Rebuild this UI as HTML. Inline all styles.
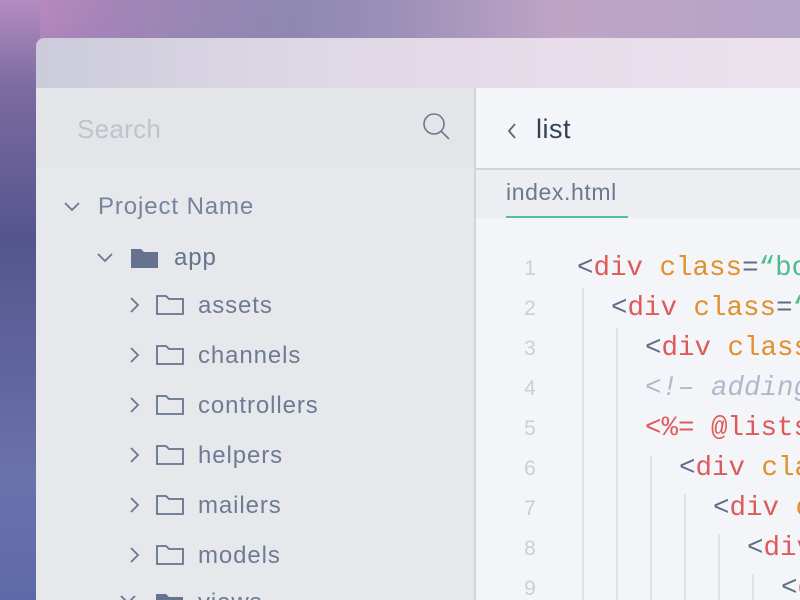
<!DOCTYPE html>
<html><head><meta charset="utf-8"><style>
*{margin:0;padding:0;box-sizing:border-box}
html{width:800px;height:600px;overflow:hidden}
body{width:800px;height:600px;overflow:hidden;position:relative;font-family:"Liberation Sans",sans-serif}
#root{position:absolute;left:0;top:0;width:800px;height:600px;overflow:hidden;
background:radial-gradient(ellipse 300px 200px at 0px 0px,#c48fc4,transparent),linear-gradient(90deg,#5a5a92 0%,#7c7fa8 20%,#9c90b8 50%,#c0a4c6 70%,#b4a4c8 100%);}
.bgl{position:absolute;left:0;top:0;width:40px;height:600px;background:linear-gradient(180deg,#b48cc0 0%,#7a6aa0 15%,#55558e 40%,#6a72ac 80%,#5e6aa8)}
.win{position:absolute;left:36px;top:38px;width:764px;height:562px;border-radius:8px 0 0 0;overflow:hidden;background:linear-gradient(90deg,#cbcbdb,#dcd6e4 30%,#e6dbe8 60%,#ece2ee)}
.side{position:absolute;left:0;top:50px;width:438px;height:512px;background:#e7e8eb;overflow:hidden}
.search{height:79px;background:#e4e5e8;position:relative}
.search span{position:absolute;left:41px;top:26px;font-size:26px;color:#bec3cc;letter-spacing:.3px}
.vb{position:absolute;left:438px;top:50px;width:2px;height:512px;background:#cdd5dd}
.main{position:absolute;left:440px;top:50px;width:324px;height:512px;background:#f4f5f8;overflow:hidden}
.hdr{height:82px;border-bottom:2px solid #cdd5dd;position:relative}
.hdr span{position:absolute;left:60px;top:26px;font-size:27px;color:#34405a;letter-spacing:.5px}
.tab{height:48px;background:#eceef1;position:relative}
.tab span{position:absolute;left:30px;top:9px;font-size:23px;color:#6c7891;letter-spacing:.6px}
.tab i{position:absolute;left:30px;bottom:0;width:122px;height:2px;background:#56bf98}
.t{position:absolute;font-size:24px;color:#6e7b95;white-space:nowrap;letter-spacing:.9px}
.code{position:absolute;font-family:"Liberation Mono",monospace;font-size:27.5px;white-space:nowrap;line-height:40px;overflow:hidden}
.ln{color:#c8cedb;font-family:"Liberation Sans",sans-serif;font-size:21px;position:absolute;left:44px;width:20px;text-align:center}
.r{color:#de5a5a}.o{color:#e0912e}.g{color:#4dbb8e}.p{color:#606d88}.c{color:#b0b9cc;font-style:italic}
.gl{position:absolute;width:2px;background:#e0e3ea}
</style></head><body><div id="root">
<div class="bgl"></div>
<div class="win">
 <div class="side"><div class="search"><span>Search</span>
  <svg style="position:absolute;left:386px;top:24px" width="32" height="32"><circle cx="12" cy="12" r="10" fill="none" stroke="#6c7891" stroke-width="1.6"/><line x1="19" y1="19" x2="27" y2="27" stroke="#6c7891" stroke-width="1.6"/></svg></div>
  <svg style="position:absolute;left:0;top:0" width="438" height="512" viewBox="36 88 438 512">
 <g fill="none" stroke="#6c7891" stroke-width="1.8">
  <path d="M65 203 L72 210 L79 203"/>
  <path d="M98 254 L105 261 L112 254"/>
  <path d="M131 298 L138 305 L131 312"/><path d="M131 348 L138 355 L131 362"/><path d="M131 398 L138 405 L131 412"/>
  <path d="M131 448 L138 455 L131 462"/><path d="M131 498 L138 505 L131 512"/><path d="M131 548 L138 555 L131 562"/>
  <path d="M121 596 L128 603 L135 596"/>
 </g>
 <path d="M131 249 h10 l3 3 h14 v16 h-27z" fill="#66738e"/>
 <path d="M156 594 h10 l3 3 h14 v10 h-27z" fill="#66738e"/>
 <g fill="none" stroke="#66738e" stroke-width="1.8">
  <path d="M157 296 h9 l3 3 h14 v15 h-26z"/>
  <path d="M157 346 h9 l3 3 h14 v15 h-26z"/>
  <path d="M157 396 h9 l3 3 h14 v15 h-26z"/>
  <path d="M157 446 h9 l3 3 h14 v15 h-26z"/>
  <path d="M157 496 h9 l3 3 h14 v15 h-26z"/>
  <path d="M157 546 h9 l3 3 h14 v15 h-26z"/>
 </g>
  </svg>
  <div class="t" style="left:62px;top:105px;color:#7783a0">Project Name</div>
  <div class="t" style="left:138px;top:156px;color:#66738e">app</div>
  <div class="t" style="left:162px;top:204px">assets</div>
  <div class="t" style="left:162px;top:254px">channels</div>
  <div class="t" style="left:162px;top:304px">controllers</div>
  <div class="t" style="left:162px;top:354px">helpers</div>
  <div class="t" style="left:162px;top:404px">mailers</div>
  <div class="t" style="left:162px;top:454px">models</div>
  <div class="t" style="left:162px;top:501px;height:11px;overflow:hidden">views</div>
 </div>
 <div class="vb"></div>
 <div class="main"><div class="hdr"><svg style="position:absolute;left:30px;top:34px" width="12" height="20"><path d="M9 2 L3 9 L9 16" fill="none" stroke="#5a6680" stroke-width="1.8"/></svg><span>list</span></div>
 <div class="tab"><span>index.html</span><i></i></div>
 <div class="gl" style="left:106px;top:200px;height:312px"></div>
 <div class="gl" style="left:140px;top:240px;height:272px"></div>
 <div class="gl" style="left:174px;top:368px;height:144px"></div>
 <div class="gl" style="left:208px;top:406px;height:106px"></div>
 <div class="gl" style="left:242px;top:446px;height:66px"></div>
 <div class="gl" style="left:276px;top:486px;height:26px"></div>
 <div class="ln" style="top:169px">1</div><div class="ln" style="top:209px">2</div><div class="ln" style="top:249px">3</div>
 <div class="ln" style="top:289px">4</div><div class="ln" style="top:329px">5</div><div class="ln" style="top:369px">6</div>
 <div class="ln" style="top:409px">7</div><div class="ln" style="top:449px">8</div><div class="ln" style="top:489px;height:23px;overflow:hidden">9</div>
 <div class="code" style="left:101px;top:161px;width:223px"><span class="p">&lt;</span><span class="r">div</span> <span class="o">class</span><span class="p">=</span><span class="g">“box</span></div>
 <div class="code" style="left:135px;top:201px;width:189px"><span class="p">&lt;</span><span class="r">div</span> <span class="o">class</span><span class="p">=</span><span class="g">“</span></div>
 <div class="code" style="left:169px;top:241px;width:155px"><span class="p">&lt;</span><span class="r">div</span> <span class="o">class</span></div>
 <div class="code c" style="left:169px;top:281px;width:155px">&lt;!– adding</div>
 <div class="code r" style="left:169px;top:321px;width:155px">&lt;%= @lists</div>
 <div class="code" style="left:203px;top:361px;width:121px"><span class="p">&lt;</span><span class="r">div</span> <span class="o">cla</span></div>
 <div class="code" style="left:237px;top:401px;width:87px"><span class="p">&lt;</span><span class="r">div</span> <span class="o">c</span></div>
 <div class="code" style="left:271px;top:441px;width:53px"><span class="p">&lt;</span><span class="r">div</span></div>
 <div class="code" style="left:305px;top:481px;width:19px;height:31px"><span class="p">&lt;</span><span class="r">d</span></div>
 </div>
</div>
</div></body></html>
